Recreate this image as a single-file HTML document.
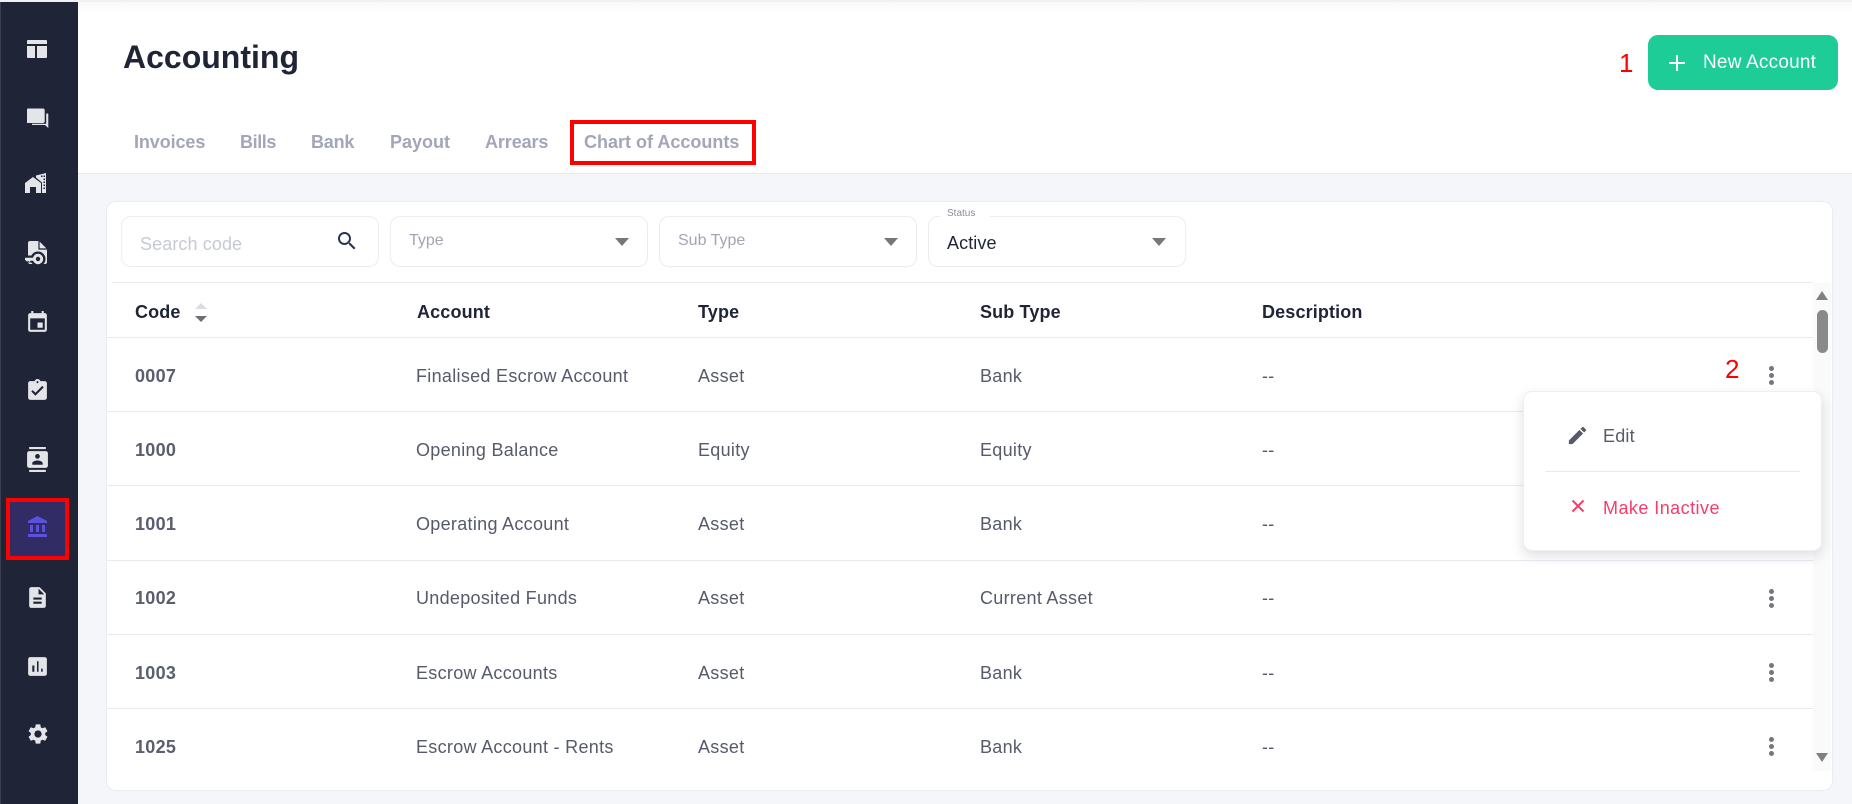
<!DOCTYPE html>
<html><head><meta charset="utf-8"><title>Accounting</title>
<style>
*{box-sizing:border-box;margin:0;padding:0}
html,body{width:1852px;height:804px;overflow:hidden;background:#f5f6fa;font-family:"Liberation Sans",sans-serif;position:relative}
.a{position:absolute;white-space:nowrap}
.t{position:absolute;white-space:nowrap;line-height:24px;font-size:18px;letter-spacing:.3px;color:#565a6b}
.b{font-weight:bold;color:#5a5e6e}
.h{position:absolute;white-space:nowrap;line-height:24px;font-size:18px;letter-spacing:.14px;color:#1f2437;font-weight:bold;top:300px}
.tab{position:absolute;top:129.5px;line-height:24px;font-size:18px;font-weight:bold;color:#a3a6b8;white-space:nowrap}
.l{position:absolute;left:107px;width:1706px;height:1px;background:#e9eaf0}
.f{position:absolute;top:216px;height:51px;background:#fff;border:1px solid #ececf2;border-radius:10px}
.ph{position:absolute;top:229px;line-height:24px;font-size:16px;color:#a2a5b3;white-space:nowrap}
.ar{position:absolute;top:238px;width:0;height:0;border-left:7px solid transparent;border-right:7px solid transparent;border-top:8px solid #76777c}
.d{position:absolute;left:1769px;width:5px;height:5px;border-radius:50%;background:#76777c}
svg{position:absolute;display:block}
</style></head><body>

<!-- sidebar -->
<div class="a" style="left:0;top:0;width:78px;height:804px;background:#1f2437"></div>
<div class="a" style="left:0;top:0;width:1px;height:804px;background:#3b3f50"></div>

<!-- header -->
<div class="a" style="left:78px;top:0;width:1774px;height:174px;background:#fff;border-bottom:1px solid #e9eaf0"></div>
<div class="a" style="left:0;top:0;width:1852px;height:2px;background:#f0f0f2"></div>
<div class="a" style="left:78px;top:2px;width:1774px;height:12px;background:linear-gradient(#f9f9fa,#fff)"></div>

<div class="a" style="left:123px;top:36px;font-size:32px;line-height:42px;font-weight:bold;color:#1f2437">Accounting</div>
<div class="tab" style="left:134px;letter-spacing:-.1px">Invoices</div>
<div class="tab" style="left:240px;letter-spacing:-.4px">Bills</div>
<div class="tab" style="left:311px;letter-spacing:-.2px">Bank</div>
<div class="tab" style="left:390px">Payout</div>
<div class="tab" style="left:485px;letter-spacing:-.1px">Arrears</div>
<div class="tab" style="left:584px">Chart of Accounts</div>
<div class="a" style="left:570px;top:120px;width:186px;height:45px;border:4px solid #f00"></div>

<div class="a" style="left:1619px;top:47px;font-size:26px;line-height:32px;color:#f00">1</div>
<div class="a" style="left:1648px;top:35px;width:190px;height:55px;background:#1dcc97;border-radius:10px"></div>
<svg style="left:1668px;top:54px" width="18" height="18" viewBox="0 0 18 18"><path d="M8 1h2v7h7v2h-7v7H8v-7H1V8h7z" fill="#fff"/></svg>
<div class="a" style="left:1703px;top:51px;font-size:19px;letter-spacing:.2px;line-height:24px;color:#fff">New Account</div>

<!-- card -->
<div class="a" style="left:106px;top:201px;width:1727px;height:590px;background:#fff;border:1px solid #ebecf2;border-radius:10px"></div>
<div class="a" style="left:1813px;top:283px;width:18px;height:488px;background:#fafafa"></div>

<div class="f" style="left:121px;width:258px"></div>
<div class="a" style="left:140px;top:232px;font-size:18px;letter-spacing:.1px;line-height:24px;color:#c6c9d6">Search code</div>
<svg style="left:335px;top:229px" width="24" height="24" viewBox="0 0 24 24"><path d="M15.5 14h-.79l-.28-.27C15.41 12.59 16 11.11 16 9.5 16 5.91 13.09 3 9.5 3S3 5.91 3 9.5 5.91 16 9.5 16c1.61 0 3.09-.59 4.23-1.57l.27.28v.79l5 4.99L20.49 19l-4.99-5zm-6 0C7.01 14 5 11.99 5 9.5S7.01 5 9.5 5 14 7.01 14 9.5 11.99 14 9.5 14z" fill="#2b3150"/></svg>

<div class="f" style="left:390px;width:258px"></div>
<div class="ph" style="left:409px">Type</div>
<div class="ar" style="left:615px"></div>
<div class="f" style="left:659px;width:258px"></div>
<div class="ph" style="left:678px">Sub Type</div>
<div class="ar" style="left:884px"></div>
<div class="f" style="left:928px;width:258px"></div>
<div class="a" style="left:940px;top:206px;width:50px;height:12px;background:#fff"></div>
<div class="a" style="left:947px;top:206.500px;font-size:10px;line-height:14px;color:#8a8d9b">Status</div>
<div class="a" style="left:947px;top:231px;font-size:18px;letter-spacing:.1px;line-height:24px;color:#1f2437">Active</div>
<div class="ar" style="left:1152px"></div>

<!-- table -->
<div class="l" style="left:112px;width:1701px;top:282px"></div>
<div class="l" style="top:337px"></div>
<div class="l" style="top:411px"></div>
<div class="l" style="top:485px"></div>
<div class="l" style="top:560px"></div>
<div class="l" style="top:634px"></div>
<div class="l" style="top:708px"></div>

<div class="h" style="left:135px">Code</div>
<div class="a" style="left:195px;top:303px;width:0;height:0;border-left:6px solid transparent;border-right:6px solid transparent;border-bottom:6px solid #dcdde1"></div>
<div class="a" style="left:195px;top:316px;width:0;height:0;border-left:6px solid transparent;border-right:6px solid transparent;border-top:6px solid #6f7075"></div>
<div class="h" style="left:417px">Account</div>
<div class="h" style="left:698px">Type</div>
<div class="h" style="left:980px">Sub Type</div>
<div class="h" style="left:1262px">Description</div>

<div class="t b" style="left:135px;top:364px">0007</div><div class="t" style="left:416px;top:364px">Finalised Escrow Account</div><div class="t" style="left:698px;top:364px">Asset</div><div class="t" style="left:980px;top:364px">Bank</div><div class="t" style="left:1262px;top:364px">--</div>
<div class="t b" style="left:135px;top:438px">1000</div><div class="t" style="left:416px;top:438px">Opening Balance</div><div class="t" style="left:698px;top:438px">Equity</div><div class="t" style="left:980px;top:438px">Equity</div><div class="t" style="left:1262px;top:438px">--</div>
<div class="t b" style="left:135px;top:512px">1001</div><div class="t" style="left:416px;top:512px">Operating Account</div><div class="t" style="left:698px;top:512px">Asset</div><div class="t" style="left:980px;top:512px">Bank</div><div class="t" style="left:1262px;top:512px">--</div>
<div class="t b" style="left:135px;top:586px">1002</div><div class="t" style="left:416px;top:586px">Undeposited Funds</div><div class="t" style="left:698px;top:586px">Asset</div><div class="t" style="left:980px;top:586px">Current Asset</div><div class="t" style="left:1262px;top:586px">--</div>
<div class="t b" style="left:135px;top:661px">1003</div><div class="t" style="left:416px;top:661px">Escrow Accounts</div><div class="t" style="left:698px;top:661px">Asset</div><div class="t" style="left:980px;top:661px">Bank</div><div class="t" style="left:1262px;top:661px">--</div>
<div class="t b" style="left:135px;top:735px">1025</div><div class="t" style="left:416px;top:735px">Escrow Account - Rents</div><div class="t" style="left:698px;top:735px">Asset</div><div class="t" style="left:980px;top:735px">Bank</div><div class="t" style="left:1262px;top:735px">--</div>

<!-- row menus -->
<div class="d" style="top:366px"></div><div class="d" style="top:373px"></div><div class="d" style="top:380px"></div>
<div class="d" style="top:589px"></div><div class="d" style="top:596px"></div><div class="d" style="top:603px"></div>
<div class="d" style="top:663px"></div><div class="d" style="top:670px"></div><div class="d" style="top:677px"></div>
<div class="d" style="top:737px"></div><div class="d" style="top:744px"></div><div class="d" style="top:751px"></div>
<div class="a" style="left:1725px;top:353px;font-size:26px;line-height:32px;color:#f00">2</div>

<!-- scrollbar -->
<div class="a" style="left:1816px;top:291px;width:0;height:0;border-left:6px solid transparent;border-right:6px solid transparent;border-bottom:9px solid #808080"></div>
<div class="a" style="left:1817px;top:310px;width:11px;height:43px;background:#8a8a8a;border-radius:6px"></div>
<div class="a" style="left:1816px;top:753px;width:0;height:0;border-left:6px solid transparent;border-right:6px solid transparent;border-top:9px solid #808080"></div>

<!-- popup -->
<div class="a" style="left:1523px;top:391px;width:299px;height:160px;background:#fff;border:1px solid #eeeef3;border-radius:9px;box-shadow:0 5px 12px rgba(30,35,60,.14)"></div>
<svg style="left:1566px;top:424px" width="23" height="23" viewBox="0 0 24 24"><path d="M3 17.25V21h3.75L17.81 9.94l-3.75-3.75L3 17.25zM20.71 7.04c.39-.39.39-1.02 0-1.41l-2.34-2.34c-.39-.39-1.02-.39-1.41 0l-1.83 1.83 3.75 3.75 1.83-1.83z" fill="#565a6b"/></svg>
<div class="a" style="left:1603px;top:424px;font-size:18px;letter-spacing:.2px;line-height:24px;color:#565a6b">Edit</div>
<div class="a" style="left:1545px;top:471px;width:255px;height:1px;background:#e8e8ee"></div>
<svg style="left:1571px;top:499px" width="14" height="14" viewBox="0 0 14 14"><path d="M1.500 1.500l11 11M12.500 1.500l-11 11" stroke="#f93a6a" stroke-width="2" fill="none"/></svg>
<div class="a" style="left:1603px;top:496px;font-size:18px;letter-spacing:.45px;line-height:24px;color:#f93a6a">Make Inactive</div>

<!-- active nav -->
<div class="a" style="left:6px;top:498px;width:63px;height:62px;background:#312c64;border:4px solid #f00"></div>

<!-- nav icons -->
<svg style="left:25px;top:37px" width="24" height="24" viewBox="0 0 24 24"><path d="M2 4c0-.6.4-1 1-1h18c.6 0 1 .4 1 1v3H2zM2 9h8v12H3c-.6 0-1-.4-1-1zM12 9h10v11c0 .6-.4 1-1 1h-9z" fill="#e4e5e9"/></svg>
<svg style="left:20px;top:100px" width="36" height="36" viewBox="0 0 36 36"><path d="M8 8.500h15c1 0 1.700.7 1.700 1.700v11.100c0 1-.7 1.700-1.700 1.700H7V9.500c0-.6.4-1 1-1z" fill="#e4e5e9"/><path d="M26.200 13.500h1.300c.5 0 .8.4.8.8V28l-3.300-3H12v-1.200h14.200z" fill="#e4e5e9"/></svg>
<svg style="left:20px;top:166px" width="32" height="32" viewBox="0 0 32 32"><path d="M13 11l8 6v10h-5v-6h-6v6H5V17z" fill="#e4e5e9"/><path d="M16 9.500l10-2.500v20h-4V16.500l-6-5z" fill="#e4e5e9"/><path d="M21 9.500h1.500V11H21zM23.500 9.500H25V11h-1.500zM23.500 12.500H25V14h-1.500zM23.500 15.500H25V17h-1.500zM23.500 18.500H25V20h-1.500zM23.500 21.500H25V23h-1.500z" fill="#1f2437"/></svg>
<svg style="left:20px;top:236px" width="32" height="32" viewBox="0 0 32 32"><path d="M10 5h9l8 8v13c0 1.300-.8 2-2 2H10c-1.200 0-2-.7-2-2V7c0-1.200.8-2 2-2z" fill="#e4e5e9"/><path d="M19 5v8h8" fill="none" stroke="#1f2437" stroke-width="1.200"/><circle cx="18" cy="23" r="7.500" fill="#1f2437"/><rect x="3" y="19.500" width="13" height="7" fill="#1f2437"/><circle cx="18" cy="23" r="5.200" fill="#e4e5e9"/><circle cx="18" cy="23" r="2.200" fill="#1f2437"/><path d="M5 21.700h9v3H10.500l-1.200 1.500-1.300-1.500-1 1-2-2z" fill="#e4e5e9"/></svg>
<svg style="left:25px;top:310px" width="25" height="25" viewBox="0 0 24 24"><path d="M17 12h-5v5h5v-5zM16 1v2H8V1H6v2H5c-1.110 0-1.990.9-1.990 2L3 19c0 1.100.89 2 2 2h14c1.100 0 2-.9 2-2V5c0-1.100-.9-2-2-2h-1V1h-2zm3 18H5V8h14v11z" fill="#e4e5e9"/></svg>
<svg style="left:25px;top:378px" width="25" height="25" viewBox="0 0 24 24"><path d="M19 3h-4.180C14.400 1.840 13.300 1 12 1c-1.300 0-2.400.84-2.820 2H5c-1.100 0-2 .9-2 2v14c0 1.100.9 2 2 2h14c1.100 0 2-.9 2-2V5c0-1.100-.9-2-2-2zm-7 0c.55 0 1 .45 1 1s-.45 1-1 1-1-.45-1-1 .45-1 1-1zm-2 14l-4-4 1.410-1.410L10 14.170l6.590-6.590L18 9l-8 8z" fill="#e4e5e9"/></svg>
<svg style="left:25px;top:447px" width="25" height="25" viewBox="0 0 24 24"><path d="M20 0H4v2h16V0zM4 24h16v-2H4v2zM20 4H4c-1.100 0-2 .9-2 2v12c0 1.100.9 2 2 2h16c1.100 0 2-.9 2-2V6c0-1.100-.9-2-2-2zm-8 2.750c1.240 0 2.250 1.010 2.250 2.250s-1.010 2.250-2.250 2.250S9.750 10.240 9.750 9 10.760 6.750 12 6.750zM17 17H7v-1.500c0-1.670 3.330-2.500 5-2.500s5 .83 5 2.500V17z" fill="#e4e5e9"/></svg>
<svg style="left:26px;top:515px" width="24" height="24" viewBox="0 0 24 24"><path d="M4 10v7h3v-7H4zm6 0v7h3v-7h-3zM2 22h19v-3H2v3zm14-12v7h3v-7h-3zm-4.500-9L2 6v2h19V6l-9.500-5z" fill="#5b50e0"/></svg>
<svg style="left:25px;top:585px" width="25" height="25" viewBox="0 0 24 24"><path d="M14 2H6c-1.100 0-1.990.9-1.990 2L4 20c0 1.100.89 2 1.990 2H18c1.100 0 2-.9 2-2V8l-6-6zm2 16H8v-2h8v2zm0-4H8v-2h8v2zm-3-5V3.500L18.500 9H13z" fill="#e4e5e9"/></svg>
<svg style="left:25px;top:654px" width="25" height="25" viewBox="0 0 24 24"><path d="M19 3H5c-1.100 0-2 .9-2 2v14c0 1.100.9 2 2 2h14c1.100 0 2-.9 2-2V5c0-1.100-.9-2-2-2zM9 17H7v-6h2v6zm4 0h-1.500V7H13v10zm4 0h-1.500v-3H17v3z" fill="#e4e5e9"/></svg>
<svg style="left:26px;top:722px" width="24" height="24" viewBox="0 0 24 24"><path d="M19.140 12.940c.04-.3.06-.61.06-.94 0-.32-.02-.64-.07-.94l2.030-1.580c.18-.14.23-.41.12-.61l-1.920-3.320c-.12-.22-.37-.29-.59-.22l-2.390.96c-.5-.38-1.030-.7-1.620-.94l-.36-2.540c-.04-.24-.24-.41-.48-.41h-3.840c-.24 0-.43.17-.47.41l-.36 2.540c-.59.24-1.130.57-1.620.94l-2.390-.96c-.22-.08-.47 0-.59.22L2.740 8.870c-.12.21-.08.47.12.61l2.030 1.580c-.05.3-.09.63-.09.94s.02.64.07.94l-2.030 1.580c-.18.14-.23.41-.12.61l1.920 3.320c.12.22.37.29.59.22l2.390-.96c.5.38 1.030.7 1.620.94l.36 2.540c.05.24.24.41.48.41h3.840c.24 0 .44-.17.47-.41l.36-2.540c.59-.24 1.130-.56 1.620-.94l2.390.96c.22.08.47 0 .59-.22l1.920-3.320c.12-.22.07-.47-.12-.61l-2.010-1.580zM12 15.600c-1.980 0-3.600-1.620-3.600-3.600s1.620-3.600 3.600-3.600 3.600 1.620 3.600 3.600-1.620 3.600-3.600 3.600z" fill="#e4e5e9"/></svg>
</body></html>
